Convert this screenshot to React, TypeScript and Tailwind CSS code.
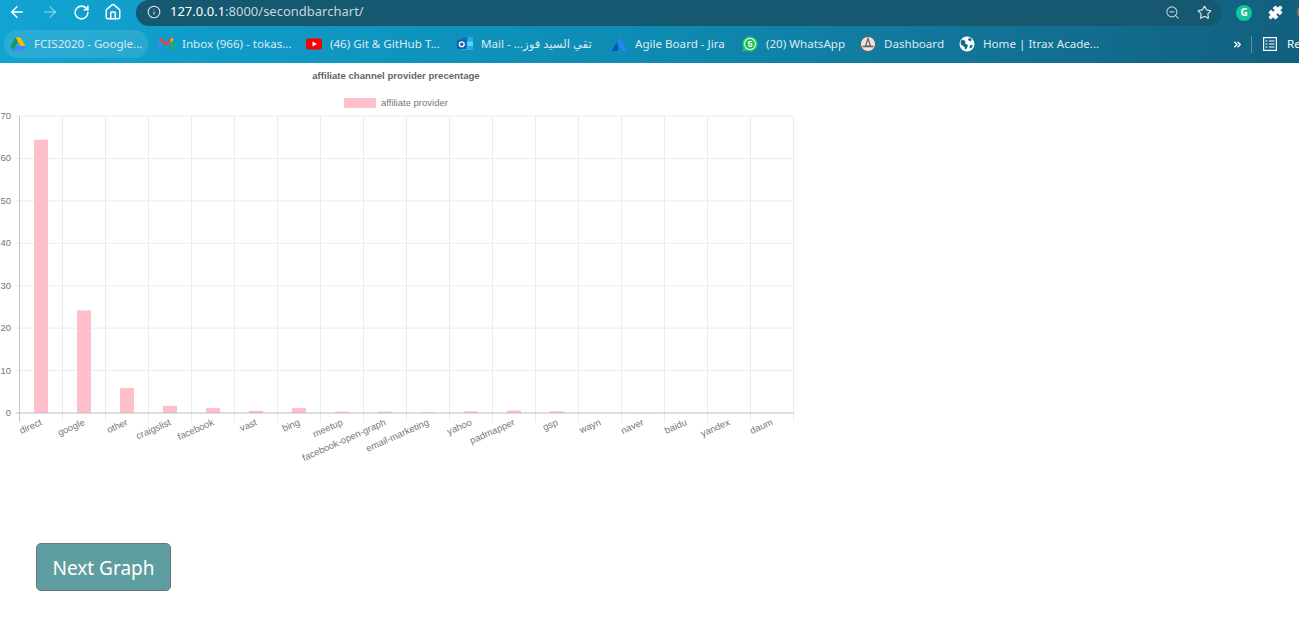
import React from 'react';
import { ArrowLeft, ArrowRight, RotateCw, Home, Info, ZoomOut, Star, Puzzle, ChevronsRight } from 'lucide-react';

const labels = [
  'direct', 'google', 'other', 'craigslist', 'facebook', 'vast', 'bing', 'meetup', 'facebook-open-graph',
  'email-marketing', 'yahoo', 'padmapper', 'gsp', 'wayn', 'naver', 'baidu', 'yandex', 'daum',
];
const values = [64.4, 24.2, 5.9, 1.7, 1.2, 0.5, 1.2, 0.3, 0.3, 0.2, 0.4, 0.6, 0.4, 0, 0.05, 0, 0, 0];

function DriveIcon() {
  return (
    <svg width="16" height="16" viewBox="0 0 16 16">
      <path d="M5.5 1.5h5L15.5 10h-5z" fill="#fbbc04" />
      <path d="M5.5 1.5 0.5 10 3 14.5 8 6z" fill="#0f9d58" />
      <path d="M3 14.5h10l2.500-4.500H5.500z" fill="#4285f4" />
    </svg>
  );
}

function GmailIcon() {
  return (
    <svg width="16" height="16" viewBox="0 0 16 16">
      <path d="M0.500 3.500v10h3V7z" fill="#4285f4" />
      <path d="M12.500 7v6.500h3v-10z" fill="#34a853" />
      <path d="M0.500 3.500 8 9.500l7.500-6-2-1.500L8 6 2.500 2z" fill="#ea4335" />
      <path d="M12.500 3v4l3-3.500-1-1.500z" fill="#fbbc04" />
    </svg>
  );
}

function YoutubeIcon() {
  return (
    <svg width="16" height="16" viewBox="0 0 16 16">
      <rect x="0" y="2.500" width="16" height="11" rx="2.500" fill="#f00" />
      <path d="M6.500 5.500v5L11 8z" fill="#fff" />
    </svg>
  );
}

function OutlookIcon() {
  return (
    <svg width="16" height="16" viewBox="0 0 16 16">
      <rect x="5" y="1" width="11" height="13" rx="1" fill="#28a8ea" />
      <rect x="5" y="1" width="5.500" height="4.500" fill="#0078d4" />
      <rect x="10.500" y="5.500" width="5.500" height="4.500" fill="#50d9ff" />
      <rect x="0" y="3.500" width="9.500" height="9.500" rx="1" fill="#0f5cb0" />
      <circle cx="4.750" cy="8.250" r="2.400" fill="none" stroke="#fff" strokeWidth="1.400" />
    </svg>
  );
}

function JiraIcon() {
  return (
    <svg width="16" height="16" viewBox="0 0 16 16">
      <path d="M8.300 1C7 3.500 7 6 8.300 8.500L11.500 15H16z" fill="#2684ff" />
      <path d="M5 7.500 0.500 15h6.300c.8-2.300.5-4.500-.9-7.500-.3-.5-.6-.5-.9 0z" fill="#0052cc" />
    </svg>
  );
}

function WhatsappIcon() {
  return (
    <svg width="16" height="16" viewBox="0 0 16 16">
      <path d="M8 0.500a7.500 7.500 0 0 0-6.400 11.400L0.500 15.500l3.700-1A7.500 7.500 0 1 0 8 0.500z" fill="#25d366" />
      <circle cx="8" cy="8" r="5.900" fill="#fff" />
      <circle cx="8" cy="8" r="4.900" fill="#1fb855" />
      <text x="8" y="11.200" textAnchor="middle" fontSize="9" fontWeight="700" fill="#fff" fontFamily="Liberation Sans, sans-serif">5</text>
    </svg>
  );
}

function DashboardIcon() {
  return (
    <svg width="16" height="16" viewBox="0 0 16 16">
      <circle cx="8" cy="8" r="7.500" fill="#e8e4df" stroke="#6b5f5a" />
      <path d="M8 2.500 5.500 10h5z" fill="none" stroke="#6b5f5a" strokeWidth="1.200" />
      <path d="M2.500 10.500h11" stroke="#6b5f5a" strokeWidth="1.500" />
    </svg>
  );
}

function GlobeIcon() {
  return (
    <svg width="16" height="16" viewBox="0 0 16 16">
      <circle cx="8" cy="8" r="7.500" fill="#fff" />
      <path d="M3 3.500 6.500 5 6 7.500l3 1.500-1 3-1.500 2-1-3L2 8.500 1.500 6zM10 1.500l3 2-1.500 2L9 4zM11 9l3 .5-2 3-1.500-1z" fill="#10698c" />
    </svg>
  );
}

function ReadingListIcon() {
  return (
    <svg width="14" height="14" viewBox="0 0 14 14" fill="none" stroke="#fff" strokeWidth="1.200">
      <rect x="0.600" y="0.600" width="12.800" height="12.800" />
      <path d="M2.500 4h2M2.500 7h2M2.500 10h2M6 4h5.500M6 7h5.500M6 10h5.500" />
    </svg>
  );
}

function Bookmark({ icon, width, active, children }: { icon: React.ReactNode; width: number; active?: boolean; children: React.ReactNode }) {
  return (
    <div className={`flex h-7 items-center gap-2 rounded-full px-[6px] ${active ? 'bg-white/10' : ''}`}>
      <span className="flex h-4 w-4 shrink-0 items-center justify-center">{icon}</span>
      <span className="whitespace-nowrap text-[11.600px] text-[#dcebf1]" style={{ width }}>
        {children}
      </span>
    </div>
  );
}

function BrowserBar() {
  return (
    <header className="h-[63px] w-full shrink-0 bg-gradient-to-r from-[#11a3d2] via-[#0e8bb2] to-[#125f7e] [font-family:'Noto_Sans','DejaVu_Sans',sans-serif]">
      <div className="flex h-[26px] items-center">
        <div className="flex w-[136px] shrink-0 items-center pb-[2px] pl-[8px] text-white">
          <ArrowLeft size={18} strokeWidth={2} />
          <ArrowRight size={18} strokeWidth={2} className="ml-[15px] text-white/40" />
          <RotateCw size={17} strokeWidth={2.200} className="ml-[14px]" />
          <Home size={18} strokeWidth={2} className="ml-[14px]" />
        </div>
        <div className="flex h-[26px] w-[1086px] shrink-0 items-center rounded-full bg-[#155870] pb-[2px] pl-[11px] pr-[10px]">
          <Info size={14} strokeWidth={1.800} className="text-[#dfe8ec]" />
          <span className="ml-[9px] text-[13px] text-[#c6d6dd]">
            <span className="text-white">127.0.0.1</span>:8000/secondbarchart/
          </span>
          <ZoomOut size={15} strokeWidth={1.800} className="ml-auto text-[#b9cbd3]" />
          <Star size={15} strokeWidth={1.800} className="ml-[17px] text-[#dfe8ec]" />
        </div>
        <div className="ml-[14px] flex h-4 w-4 shrink-0 items-center justify-center rounded-full bg-[#15c39a] pb-[2px] text-[10px] font-bold text-white">
          G
        </div>
        <Puzzle size={15} fill="#fff" strokeWidth={1.500} className="mb-[2px] ml-[16px] shrink-0 text-white" />
        <div className="mb-[2px] ml-[14px] h-4 w-4 shrink-0 rounded-full bg-[#a5725f]" />
      </div>
      <div className="flex h-[37px] items-center overflow-hidden pb-[1px] pl-[4px]">
        <div className="flex items-center gap-1">
          <Bookmark icon={<DriveIcon />} width={108} active>FCIS2020 - Google...</Bookmark>
          <Bookmark icon={<GmailIcon />} width={108}>Inbox (966) - tokas...</Bookmark>
          <Bookmark icon={<YoutubeIcon />} width={111}>(46) Git &amp; GitHub T...</Bookmark>
          <Bookmark icon={<OutlookIcon />} width={114}>Mail - <bdi dir="rtl">تقي السيد فوز...</bdi></Bookmark>
          <Bookmark icon={<JiraIcon />} width={91}>Agile Board - Jira</Bookmark>
          <Bookmark icon={<WhatsappIcon />} width={78}>(20) WhatsApp</Bookmark>
          <Bookmark icon={<DashboardIcon />} width={59}>Dashboard</Bookmark>
          <Bookmark icon={<GlobeIcon />} width={110}>Home | Itrax Acade...</Bookmark>
        </div>
        <ChevronsRight size={11} strokeWidth={3} className="ml-[133px] shrink-0 text-white" />
        <div className="ml-[8px] h-[17px] w-px shrink-0 bg-white/30" />
        <div className="ml-[11px] flex shrink-0 items-center gap-[10px]">
          <ReadingListIcon />
          <span className="text-[11.600px] text-white">Reading list</span>
        </div>
      </div>
    </header>
  );
}

function BarChart() {
  const left = 19.5;
  const right = 793.5;
  const top = 116;
  const bottom = 413;
  const step = (right - left) / labels.length;
  const y = (v: number) => bottom - ((bottom - top) * v) / 70;

  // svg sits below the 63px browser bar, so everything is moved up by that
  return (
    <svg width="800" height="400" viewBox="0 63 800 400" className="block shrink-0" fontFamily="Liberation Sans, sans-serif">
      <text x="396" y="79" textAnchor="middle" fontSize="9.600" fontWeight="700" fill="#666">
        affiliate channel provider precentage
      </text>
      <rect x="344" y="98" width="32" height="10" fill="#ffc0cb" />
      <text x="381" y="106" fontSize="9.500" fill="#777">affiliate provider</text>

      {[10, 20, 30, 40, 50, 60, 70].map((v) => (
        <line key={v} x1={left - 4} x2={right} y1={y(v)} y2={y(v)} stroke="#ececec" />
      ))}
      {labels.map((_, i) => (
        <line key={i} x1={left + step * (i + 1)} x2={left + step * (i + 1)} y1={top} y2={bottom + 9} stroke="#ececec" />
      ))}
      <line x1={left} x2={left} y1={top} y2={bottom + 9} stroke="#c4c4c4" />
      {[0, 10, 20, 30, 40, 50, 60, 70].map((v) => (
        <text key={v} x="11" y={y(v) + 3} textAnchor="end" fontSize="9.500" fill="#777">{v}</text>
      ))}

      {values.map((v, i) => (
        <rect key={i} x={left + step * i + 14.500} y={y(v)} width="14" height={bottom - y(v)} fill="#ffc0cb" />
      ))}
      <line x1={left - 4} x2={right} y1={bottom} y2={bottom} stroke="#bdbdbd" />

      {labels.map((label, i) => (
        <text
          key={label}
          transform={`translate(${left + step * i + 23} 424.500) rotate(-24)`}
          textAnchor="end"
          fontSize="9.500"
          fill="#777"
        >
          {label}
        </text>
      ))}
    </svg>
  );
}

export default function App() {
  return (
    <div className="flex h-[633px] w-full flex-col overflow-hidden bg-white">
      <BrowserBar />
      <BarChart />
      <div className="mt-[80px] pl-[36px]">
        <button className="h-[48px] w-[135px] rounded-[5px] border border-[#6c757d] bg-[#5f9ea0] pt-[3px] text-[19px] text-white [font-family:'Noto_Sans',sans-serif]">
          Next Graph
        </button>
      </div>
    </div>
  );
}
